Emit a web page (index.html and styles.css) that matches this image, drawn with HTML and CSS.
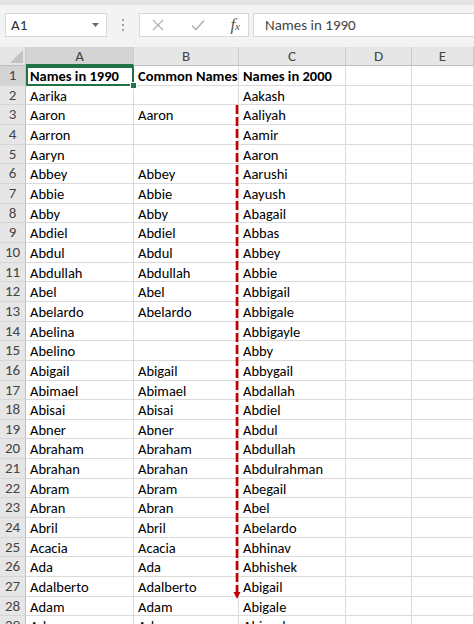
FILE: index.html
```html
<!DOCTYPE html>
<html lang="en">
<head>
    <meta charset="UTF-8">
    <meta name="viewport" content="width=device-width, initial-scale=1.0">
    <title>Names in 1990</title>
    <link rel="stylesheet" href="styles.css">
</head>
<body>
    <div class="topbar">
        <div class="namebox">
            <span>A1</span>
            <svg class="caret" width="7" height="4" viewBox="0 0 7 4"><polygon points="0,0 7,0 3.5,4" fill="#6a6a6a"/></svg>
        </div>
        <div class="grip"><span></span><span></span><span></span></div>
        <div class="fbuttons">
            <svg width="14" height="14" viewBox="0 0 14 14"><path d="M2 2 L12 12 M12 2 L2 12" stroke="#b4b4b4" stroke-width="1.3" fill="none"/></svg>
            <svg width="16" height="14" viewBox="0 0 16 14"><path d="M2 7.5 L6 11.5 L14 2.5" stroke="#b4b4b4" stroke-width="1.6" fill="none"/></svg>
            <span class="fx"><i>f</i><i class="sub">x</i></span>
        </div>
        <div class="finput">Names in 1990</div>
    </div>

    <div class="sheet">
        <div class="grid" id="grid">
            <div class="corner">
                <svg width="26" height="19" viewBox="0 0 26 19"><polygon points="10,16 23,16 23,3" fill="#c3c3c3"/></svg>
            </div>
            <div class="ch active">A</div>
            <div class="ch">B</div>
            <div class="ch">C</div>
            <div class="ch">D</div>
            <div class="ch">E</div>
        </div>
        <svg class="arrow" width="10" height="496" viewBox="0 0 10 496">
            <line x1="5" y1="0" x2="5" y2="487" stroke="#c00000" stroke-width="2.6" stroke-dasharray="9 3"/>
            <polygon points="1.5,487 8.5,487 5,494" fill="#c00000"/>
        </svg>
    </div>

    <script>
        const rows = [
            ["Names in 1990", "Common Names", "Names in 2000"],
            ["Aarika", "", "Aakash"],
            ["Aaron", "Aaron", "Aaliyah"],
            ["Aarron", "", "Aamir"],
            ["Aaryn", "", "Aaron"],
            ["Abbey", "Abbey", "Aarushi"],
            ["Abbie", "Abbie", "Aayush"],
            ["Abby", "Abby", "Abagail"],
            ["Abdiel", "Abdiel", "Abbas"],
            ["Abdul", "Abdul", "Abbey"],
            ["Abdullah", "Abdullah", "Abbie"],
            ["Abel", "Abel", "Abbigail"],
            ["Abelardo", "Abelardo", "Abbigale"],
            ["Abelina", "", "Abbigayle"],
            ["Abelino", "", "Abby"],
            ["Abigail", "Abigail", "Abbygail"],
            ["Abimael", "Abimael", "Abdallah"],
            ["Abisai", "Abisai", "Abdiel"],
            ["Abner", "Abner", "Abdul"],
            ["Abraham", "Abraham", "Abdullah"],
            ["Abrahan", "Abrahan", "Abdulrahman"],
            ["Abram", "Abram", "Abegail"],
            ["Abran", "Abran", "Abel"],
            ["Abril", "Abril", "Abelardo"],
            ["Acacia", "Acacia", "Abhinav"],
            ["Ada", "Ada", "Abhishek"],
            ["Adalberto", "Adalberto", "Abigail"],
            ["Adam", "Adam", "Abigale"],
            ["Adan", "Adan", "Abigayle"]
        ];

        const grid = document.getElementById("grid");
        rows.forEach((row, i) => {
            const first = i === 0;
            grid.innerHTML += `<div class="rh${first ? ' active' : ''}">${i + 1}</div>`;
            row.forEach((val, j) => {
                let cls = "c";
                if (first) cls += " bold";
                if (first && j === 0) cls += " sel";
                grid.innerHTML += `<div class="${cls}">${val}</div>`;
            });
            grid.innerHTML += `<div class="c"></div><div class="c"></div>`;
        });
    </script>
</body>
</html>
```

FILE: styles.css
```css
body { margin: 0; width: 474px; height: 624px; overflow: hidden; background: #fff; font-family: Carlito, Lato, "Liberation Sans", sans-serif; color: #000; }

.topbar { height: 47px; box-sizing: border-box; border-top: 5px solid #e3e3e3; background: #f3f3f3; display: flex; align-items: flex-start; padding: 8px 0 0 5px; }
.namebox { width: 102px; height: 24px; box-sizing: border-box; background: #fff; border: 1px solid #d8d8d8; display: flex; align-items: center; justify-content: space-between; padding: 0 7px 0 5px; font-size: 15px; color: #333; }
.grip { width: 32px; height: 24px; display: flex; flex-direction: column; align-items: center; justify-content: center; gap: 3px; }
.grip span { width: 2px; height: 2px; background: #a0a0a0; }
.fbuttons { width: 110px; height: 24px; box-sizing: border-box; background: #fff; border: 1px solid #d8d8d8; display: flex; align-items: center; justify-content: space-between; padding: 0 6px 0 11px; }
.fx { font-family: "Liberation Serif", serif; font-size: 17px; color: #555; padding-right: 2px; }
.fx .sub { font-size: 11px; }
.finput { flex: 1; height: 24px; margin-left: 4px; box-sizing: border-box; background: #fff; border: 1px solid #d8d8d8; border-right: none; padding-left: 11px; font-size: 15px; line-height: 22px; color: #444; }

.sheet { position: relative; }
.grid { display: grid; grid-template-columns: 26px 108px 105px 107px 66px 62px; grid-template-rows: 19px; grid-auto-rows: 19.67px; }
.corner { background: #e6e6e6; border-right: 1px solid #cbcbcb; border-bottom: 1px solid #bdbdbd; box-sizing: border-box; }
.corner svg { display: block; }
.ch { background: #e6e6e6; border-right: 1px solid #cbcbcb; border-bottom: 1px solid #bdbdbd; box-sizing: border-box; text-align: center; font-size: 15px; line-height: 19px; color: #444; }
.ch.active { background: #d4d4d4; border-bottom: 2px solid #217346; }
.rh { background: #e6e6e6; border-right: 1px solid #c0c0c0; border-bottom: 1px solid #d6d6d6; box-sizing: border-box; text-align: center; font-size: 15px; line-height: 19px; color: #444; }
.rh.active { background: #d4d4d4; }
.c { border-right: 1px solid #dadada; border-bottom: 1px solid #dadada; box-sizing: border-box; padding-left: 4px; font-size: 14.5px; line-height: 20px; white-space: nowrap; overflow: hidden; }
.c.bold { font-weight: bold; }
.c.sel { position: relative; overflow: visible; border: none; box-shadow: inset 0 0 0 2px #217346; }
.c.sel::after { content: ""; position: absolute; right: -3px; bottom: -3px; width: 5px; height: 5px; background: #217346; border: 1px solid #fff; }

.arrow { position: absolute; left: 232px; top: 58px; }
```
